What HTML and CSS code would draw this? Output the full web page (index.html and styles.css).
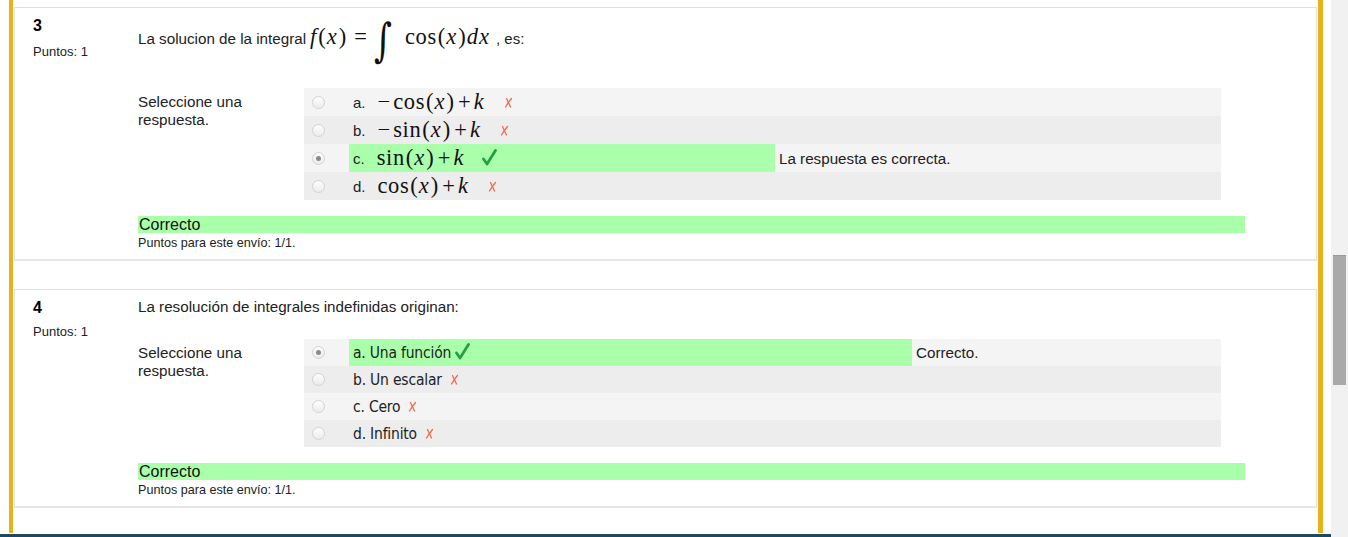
FILE: index.html
```html
<!DOCTYPE html>
<html lang="es">
<head>
<meta charset="utf-8">
<title>Cuestionario</title>
<link rel="stylesheet" href="styles.css">
</head>
<body>
<div class="window">
  <div class="viewport">
    <div class="content">
      <div class="rail">
        <div class="que q1">
          <div class="info">
            <div class="qno">3</div>
            <div class="grade">Puntos: 1</div>
          </div>
          <div class="qbody">
            <div class="qtext qtext-math">
              <span>La solucion de la integral</span>
              <span class="m formula"><i>f</i><span class="p">(</span><i>x</i><span class="p">)</span><span class="rel">=</span><span class="int">∫</span><span class="fn">cos</span><span class="p">(</span><i>x</i><span class="p">)</span><i>d</i><i>x</i></span>
              <span class="tail">, es:</span>
            </div>
            <div class="ablock">
              <div class="prompt">Seleccione una respuesta.</div>
              <div class="answer a1">
                <div class="row odd">
                  <span class="rcell"><span class="radio"></span></span>
                  <span class="label"><span class="let">a.</span><span class="m"><span class="op">−</span><span class="fn">cos</span><span class="p">(</span><i>x</i><span class="p">)</span><span class="op plus">+</span><i>k</i></span><svg class="cross" width="9" height="11" viewBox="0 0 9 11"><path d="M2.5 1.5 L6.5 10" /><path d="M7.5 1.5 Q4.5 5 1.5 10" /></svg></span>
                  <span class="fb"></span>
                </div>
                <div class="row even">
                  <span class="rcell"><span class="radio"></span></span>
                  <span class="label"><span class="let">b.</span><span class="m"><span class="op">−</span><span class="fn">sin</span><span class="p">(</span><i>x</i><span class="p">)</span><span class="op plus">+</span><i>k</i></span><svg class="cross" width="9" height="11" viewBox="0 0 9 11"><path d="M2.5 1.5 L6.5 10" /><path d="M7.5 1.5 Q4.5 5 1.5 10" /></svg></span>
                  <span class="fb"></span>
                </div>
                <div class="row odd">
                  <span class="rcell"><span class="radio checked"></span></span>
                  <span class="label correct"><span class="let">c.</span><span class="m"><span class="fn">sin</span><span class="p">(</span><i>x</i><span class="p">)</span><span class="op plus">+</span><i>k</i></span><svg class="check" width="15" height="17" viewBox="0 0 15 17"><path d="M1.5 10 L5 15 L13.5 1.5" /></svg></span>
                  <span class="fb">La respuesta es correcta.</span>
                </div>
                <div class="row even">
                  <span class="rcell"><span class="radio"></span></span>
                  <span class="label"><span class="let">d.</span><span class="m"><span class="fn">cos</span><span class="p">(</span><i>x</i><span class="p">)</span><span class="op plus">+</span><i>k</i></span><svg class="cross" width="9" height="11" viewBox="0 0 9 11"><path d="M2.5 1.5 L6.5 10" /><path d="M7.5 1.5 Q4.5 5 1.5 10" /></svg></span>
                  <span class="fb"></span>
                </div>
              </div>
            </div>
            <div class="grading">Correcto</div>
            <div class="pts">Puntos para este envío: 1/1.</div>
          </div>
        </div>

        <div class="que q2">
          <div class="info">
            <div class="qno">4</div>
            <div class="grade">Puntos: 1</div>
          </div>
          <div class="qbody">
            <div class="qtext">La resolución de integrales indefinidas originan:</div>
            <div class="ablock">
              <div class="prompt">Seleccione una respuesta.</div>
              <div class="answer a2">
                <div class="row odd">
                  <span class="rcell"><span class="radio checked"></span></span>
                  <span class="label correct narrow">a. Una función<svg class="check" width="15" height="17" viewBox="0 0 15 17"><path d="M1.5 10 L5 15 L13.5 1.5" /></svg></span>
                  <span class="fb">Correcto.</span>
                </div>
                <div class="row even">
                  <span class="rcell"><span class="radio"></span></span>
                  <span class="label narrow">b. Un escalar<svg class="cross" width="9" height="11" viewBox="0 0 9 11"><path d="M2.5 1.5 L6.5 10" /><path d="M7.5 1.5 Q4.5 5 1.5 10" /></svg></span>
                  <span class="fb"></span>
                </div>
                <div class="row odd">
                  <span class="rcell"><span class="radio"></span></span>
                  <span class="label narrow">c. Cero<svg class="cross" width="9" height="11" viewBox="0 0 9 11"><path d="M2.5 1.5 L6.5 10" /><path d="M7.5 1.5 Q4.5 5 1.5 10" /></svg></span>
                  <span class="fb"></span>
                </div>
                <div class="row even">
                  <span class="rcell"><span class="radio"></span></span>
                  <span class="label narrow">d. Infinito<svg class="cross" width="9" height="11" viewBox="0 0 9 11"><path d="M2.5 1.5 L6.5 10" /><path d="M7.5 1.5 Q4.5 5 1.5 10" /></svg></span>
                  <span class="fb"></span>
                </div>
              </div>
            </div>
            <div class="grading">Correcto</div>
            <div class="pts">Puntos para este envío: 1/1.</div>
          </div>
        </div>
      </div>
    </div>
    <div class="bottombar"></div>
  </div>
  <div class="scrollbar"><div class="thumb"></div></div>
</div>
</body>
</html>
```

FILE: styles.css
```css
* { box-sizing: border-box; }
html, body { margin: 0; padding: 0; background: #fff; }
body {
  font-family: "Liberation Sans", Arial, sans-serif;
  color: #222;
  overflow: hidden;
}
.window {
  display: flex;
  width: 1348px;
  height: 537px;
}
.viewport {
  width: 1331px;
  display: flex;
  flex-direction: column;
}
.content {
  flex: 1;
  padding-left: 9px;
  overflow: hidden;
  display: flex;
}
.rail {
  width: 1314px;
  border-left: 4px solid #e9b11d;
  border-right: 5px solid #e9b11d;
  padding: 7px 1px 0 1px;
  margin-bottom: 1px;
}
.bottombar {
  height: 3px;
  background: #1d4a62;
}
.scrollbar {
  width: 17px;
  background: #f1f1f1;
  padding: 255px 2px 0 2px;
}
.thumb {
  height: 130px;
  background: #a9a9a9;
  border-top: 1px solid #9a9a9a;
}

.que {
  display: flex;
  border: 1px solid #e0e0e0;
  border-bottom: 2px solid #e6e6e6;
  padding: 8px 71px 9px 0;
  background: #fff;
}
.que + .que { margin-top: 28px; }
.info {
  width: 123px;
  padding-left: 18px;
  flex: none;
}
.qno {
  font-size: 16px;
  font-weight: bold;
  line-height: 20px;
  color: #000;
}
.grade {
  font-size: 13px;
  line-height: 15px;
  margin-top: 8px;
  color: #222;
}
.q2 .grade { margin-top: 6px; }
.qbody { flex: 1; }
.qtext {
  font-size: 15.2px;
  line-height: 18px;
  color: #222;
  margin-bottom: 23px;
}
.qtext-math {
  display: flex;
  align-items: baseline;
  height: 49px;
  padding-top: 3px;
  margin-bottom: 23px;
}
.tail { margin-left: 6px; font-size: 15px; }

.m {
  font-family: "Liberation Serif", "DejaVu Serif", serif;
  font-size: 22.5px;
  line-height: 18px;
  color: #111;
  display: inline-flex;
  align-items: baseline;
  white-space: nowrap;
}
.m i { font-style: italic; padding-right: 1px; }
.m .p { padding: 0 1px; }
.m .fn { letter-spacing: 0.6px; }
.m .op { margin-right: 3px; }
.m .plus { margin: 0 3px; }
.formula { margin-left: 4px; }
.formula .rel { margin: 0 4px 0 7px; }
.formula .int {
  font-family: "DejaVu Serif", serif;
  font-size: 46px;
  line-height: 18px;
  margin: 0 10px 0 0;
  position: relative;
  top: 12px;
  display: inline-block;
  transform: scaleX(0.75);
}

.ablock { display: flex; }
.prompt {
  width: 166px;
  padding: 5px 48px 0 0;
  font-size: 15.2px;
  line-height: 18px;
  color: #222;
}
.answer { width: 917px; }
.row {
  display: grid;
  align-items: stretch;
  height: 28px;
}
.a1 .row { grid-template-columns: 45px 426px 1fr; }
.a2 .row { grid-template-columns: 45px 563px 1fr; height: 27px; }
.row.odd { background: #f4f4f4; }
.row.even { background: #ededed; }
.rcell {
  display: flex;
  align-items: center;
  padding-left: 8px;
}
.radio {
  width: 13px;
  height: 13px;
  border-radius: 50%;
  border: 1px solid #d2d2d2;
  background: linear-gradient(#fdfdfd, #ececec);
  display: flex;
  align-items: center;
  justify-content: center;
}
.radio.checked::after {
  content: "";
  width: 5px;
  height: 5px;
  border-radius: 50%;
  background: #8a8a8a;
}
.label {
  display: flex;
  align-items: center;
  padding-left: 4px;
  font-size: 15px;
  color: #222;
}
.label.correct { background: #aaffaa; }
.label .let { margin-right: 12px; }
.label.narrow {
  font-family: "Liberation Sans Narrow", "DejaVu Sans Condensed", "Liberation Sans", sans-serif;
  font-size: 15.5px;
  font-stretch: condensed;
  letter-spacing: -0.2px;
}
.cross { margin-left: 19px; }
.narrow .cross { margin-left: 8px; }
.cross path {
  fill: none;
  stroke: #f36a4b;
  stroke-width: 1.3;
  stroke-linecap: round;
}
.check { margin-left: 18px; margin-top: -2px; }
.narrow .check { margin-left: 4px; }
.check path {
  fill: none;
  stroke: #24a043;
  stroke-width: 2.8;
  stroke-linecap: round;
  stroke-linejoin: round;
}
.fb {
  display: flex;
  align-items: center;
  padding-left: 4px;
  font-size: 15.2px;
  color: #222;
}
.grading {
  margin-top: 16px;
  background: #aaffaa;
  font-size: 16px;
  line-height: 17px;
  height: 17px;
  padding-left: 1px;
  color: #111;
}
.pts {
  font-size: 12.6px;
  line-height: 13px;
  margin-top: 4px;
  color: #222;
}
```
